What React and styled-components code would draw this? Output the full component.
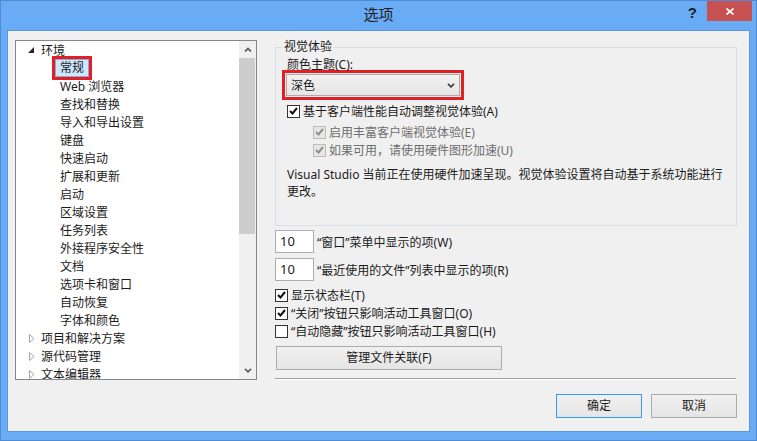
import styled, { createGlobalStyle } from "styled-components";

const GlobalStyle = createGlobalStyle`
  html, body {
    margin: 0;
    padding: 0;
    background: #6aabf5;
  }
  body {
    font-family: "Noto Sans", "Noto Sans CJK SC", sans-serif;
    font-size: 12px;
    color: #1b1b1b;
  }
`;

const Window = styled.div`
  width: 757px;
  height: 441px;
  box-sizing: border-box;
  background: #6aabf5;
  border: 1px solid #4f8ad6;
  display: flex;
  flex-direction: column;
`;

const TitleBar = styled.div`
  height: 29px;
  display: grid;
  grid-template-columns: 1fr auto 1fr;
  align-items: start;
`;

const Title = styled.div`
  grid-column: 2;
  font-size: 15px;
  line-height: 27px;
  color: #1e1e1e;
`;

const Controls = styled.div`
  justify-self: end;
  display: flex;
  align-items: flex-start;
  padding-right: 4px;
`;

const HelpButton = styled.span`
  font-family: "Liberation Sans", sans-serif;
  font-weight: bold;
  font-size: 15px;
  line-height: 14px;
  margin-top: 5px;
  margin-right: 10px;
  color: #1e1e1e;
`;

const CloseButton = styled.div`
  width: 45px;
  height: 20px;
  background: #c75050;
  display: flex;
  align-items: center;
  justify-content: center;
`;

const Client = styled.div`
  flex: 1;
  margin: 0 6px 8px 6px;
  background: #f0f0f0;
  border: 1px solid #5b97e0;
  padding: 9px 12px 0 7px;
  display: flex;
  flex-direction: column;
`;

const MainRow = styled.div`
  display: flex;
  gap: 18px;
  height: 340px;
`;

const Tree = styled.div`
  width: 242px;
  box-sizing: border-box;
  border: 1px solid #828790;
  background: #fff;
  display: flex;
`;

const TreeList = styled.div`
  flex: 1;
  overflow: hidden;
`;

const TreeRow = styled.div`
  height: 18px;
  display: flex;
  align-items: center;
  padding-left: ${(p) => p.$level * 19 + 10}px;
  white-space: nowrap;
`;

const Expander = styled.span`
  width: 15px;
  height: 18px;
  flex: none;
  display: flex;
  align-items: center;
`;

const SelectedFrame = styled.span`
  display: inline-block;
  border: 3px solid #e31e24;
  margin-left: -8px;
`;

const Highlight = styled.span`
  display: block;
  background: #cce8ff;
  border: 1px solid #84acdd;
  padding: 0 4px;
  line-height: 16px;
`;

const ScrollBar = styled.div`
  width: 17px;
  background: #f0f0f0;
  display: flex;
  flex-direction: column;
`;

const ScrollArrow = styled.div`
  height: 17px;
  display: flex;
  align-items: center;
  justify-content: center;
`;

const ScrollThumb = styled.div`
  height: 176px;
  margin: 0 1px 0 0;
  background: #cdcdcd;
`;

const ScrollTrack = styled.div`
  flex: 1;
`;

const RightPanel = styled.div`
  flex: 1;
  display: flex;
  flex-direction: column;
`;

const GroupBox = styled.fieldset`
  margin: 0;
  min-width: 0;
  height: 186px;
  box-sizing: border-box;
  padding: 2px 4px 0 11px;
  border: 1px solid #d5dfe5;
`;

const Legend = styled.legend`
  padding: 0 2px;
  margin-left: -5px;
  line-height: 14px;
`;

const FieldLabel = styled.div`
  line-height: 14px;
  margin-top: 2px;
`;

const RedFrame = styled.div`
  width: fit-content;
  margin: -2px 0 0 -5px;
  border: 3px solid #e31e24;
  padding: 1px;
`;

const Combo = styled.div`
  width: 174px;
  height: 22px;
  box-sizing: border-box;
  border: 1px solid #acacac;
  background: linear-gradient(#f2f2f2, #e5e5e5);
  display: flex;
  align-items: center;
  justify-content: space-between;
  padding: 0 4px 0 4px;
`;

const CheckRow = styled.div`
  display: flex;
  align-items: center;
  gap: 3px;
  height: 18px;
  margin-left: ${(p) => (p.$indent ? 26 : 0)}px;
  margin-top: ${(p) => p.$top || 0}px;
  color: ${(p) => (p.$disabled ? "#6d6d6d" : "#1b1b1b")};
  white-space: nowrap;
`;

const Box = styled.span`
  width: 13px;
  height: 13px;
  box-sizing: border-box;
  flex: none;
  border: 1px solid ${(p) => (p.$disabled ? "#bcbcbc" : "#333")};
  background: ${(p) => (p.$disabled ? "#e6e6e6" : "#fff")};
  display: flex;
  align-items: center;
  justify-content: center;
`;

const Note = styled.p`
  margin: 7px 0 0;
  line-height: 17px;
`;

const NumRow = styled.div`
  display: flex;
  align-items: center;
  gap: 3px;
  height: 23px;
  margin-top: ${(p) => p.$top}px;
  white-space: nowrap;
`;

const NumInput = styled.div`
  width: 39px;
  height: 23px;
  box-sizing: border-box;
  border: 1px solid #abadb3;
  background: #fff;
  padding-left: 4px;
  font-size: 13px;
  line-height: 20px;
`;

const Button = styled.div`
  width: ${(p) => p.$width}px;
  height: 24px;
  box-sizing: border-box;
  border: 1px solid ${(p) => (p.$primary ? "#3399ff" : "#acacac")};
  background: linear-gradient(#f0f0f0, #e5e5e5);
  display: flex;
  align-items: center;
  justify-content: center;
  line-height: 22px;
`;

const ManageButton = styled(Button)`
  margin: 6px 0 0 1px;
`;

const Separator = styled.div`
  margin: auto 1px 0 0;
  border-top: 1px solid #a0a0a0;
  border-bottom: 1px solid #fff;
`;

const Footer = styled.div`
  display: flex;
  justify-content: flex-end;
  gap: 9px;
  margin-top: 14px;
`;

function Check({ checked = true, disabled }) {
  return (
    <Box $disabled={disabled}>
      {checked && (
        <svg width="9" height="8" viewBox="0 0 9 8">
          <path
            d="M1 4 L3.5 6.5 L8 1"
            fill="none"
            stroke={disabled ? "#8f8f8f" : "#111"}
            strokeWidth="2"
          />
        </svg>
      )}
    </Box>
  );
}

function Chevron({ up, color = "#606060" }) {
  return (
    <svg width="8" height="5" viewBox="0 0 8 5">
      <path
        d={up ? "M1 4.5 L4 1.5 L7 4.5" : "M1 0.8 L4 3.8 L7 0.8"}
        fill="none"
        stroke={color}
        strokeWidth="1.8"
      />
    </svg>
  );
}

const children = [
  "Web 浏览器",
  "查找和替换",
  "导入和导出设置",
  "键盘",
  "快速启动",
  "扩展和更新",
  "启动",
  "区域设置",
  "任务列表",
  "外接程序安全性",
  "文档",
  "选项卡和窗口",
  "自动恢复",
  "字体和颜色",
];

const collapsed = ["项目和解决方案", "源代码管理", "文本编辑器"];

function ExpandedArrow() {
  return (
    <svg width="7" height="6" viewBox="0 0 7 6" style={{ marginLeft: 2 }}>
      <polygon points="6,0 6,6 0,6" fill="#262626" />
    </svg>
  );
}

function CollapsedArrow() {
  return (
    <svg width="6" height="9" viewBox="0 0 6 9" style={{ marginLeft: 3 }}>
      <polygon points="0.5,0.5 5,4.5 0.5,8.5" fill="#fff" stroke="#a6a6a6" />
    </svg>
  );
}

export default function App() {
  return (
    <>
      <GlobalStyle />
      <Window>
        <TitleBar>
          <Title>选项</Title>
          <Controls>
            <HelpButton>?</HelpButton>
            <CloseButton>
              <svg width="8" height="7" viewBox="0 0 8 7">
                <path d="M0.5 0.5 L7.5 6.5 M7.5 0.5 L0.5 6.5" stroke="#fff" strokeWidth="1.6" />
              </svg>
            </CloseButton>
          </Controls>
        </TitleBar>

        <Client>
          <MainRow>
            <Tree>
              <TreeList>
                <TreeRow $level={0}>
                  <Expander>
                    <ExpandedArrow />
                  </Expander>
                  环境
                </TreeRow>
                <TreeRow $level={1}>
                  <Expander />
                  <SelectedFrame>
                    <Highlight>常规</Highlight>
                  </SelectedFrame>
                </TreeRow>
                {children.map((c) => (
                  <TreeRow key={c} $level={1}>
                    <Expander />
                    {c}
                  </TreeRow>
                ))}
                {collapsed.map((c) => (
                  <TreeRow key={c} $level={0}>
                    <Expander>
                      <CollapsedArrow />
                    </Expander>
                    {c}
                  </TreeRow>
                ))}
              </TreeList>
              <ScrollBar>
                <ScrollArrow>
                  <Chevron up />
                </ScrollArrow>
                <ScrollThumb />
                <ScrollTrack />
                <ScrollArrow>
                  <Chevron />
                </ScrollArrow>
              </ScrollBar>
            </Tree>

            <RightPanel>
              <GroupBox>
                <Legend>视觉体验</Legend>
                <FieldLabel>颜色主题(C):</FieldLabel>
                <RedFrame>
                  <Combo>
                    <span>深色</span>
                    <Chevron color="#444" />
                  </Combo>
                </RedFrame>
                <CheckRow $top={2}>
                  <Check />
                  基于客户端性能自动调整视觉体验(A)
                </CheckRow>
                <CheckRow $indent $disabled $top={3}>
                  <Check disabled />
                  启用丰富客户端视觉体验(E)
                </CheckRow>
                <CheckRow $indent $disabled>
                  <Check disabled />
                  如果可用，请使用硬件图形加速(U)
                </CheckRow>
                <Note>
                  Visual Studio 当前正在使用硬件加速呈现。视觉体验设置将自动基于系统功能进行
                  <br />
                  更改。
                </Note>
              </GroupBox>

              <NumRow $top={4}>
                <NumInput>10</NumInput>
                “窗口”菜单中显示的项(W)
              </NumRow>
              <NumRow $top={5}>
                <NumInput>10</NumInput>
                “最近使用的文件”列表中显示的项(R)
              </NumRow>

              <CheckRow $top={5}>
                <Check />
                显示状态栏(T)
              </CheckRow>
              <CheckRow>
                <Check />
                “关闭”按钮只影响活动工具窗口(O)
              </CheckRow>
              <CheckRow>
                <Check checked={false} />
                “自动隐藏”按钮只影响活动工具窗口(H)
              </CheckRow>

              <ManageButton $width={226}>管理文件关联(F)</ManageButton>
              <Separator />
            </RightPanel>
          </MainRow>

          <Footer>
            <Button $width={86} $primary>
              确定
            </Button>
            <Button $width={86}>取消</Button>
          </Footer>
        </Client>
      </Window>
    </>
  );
}
